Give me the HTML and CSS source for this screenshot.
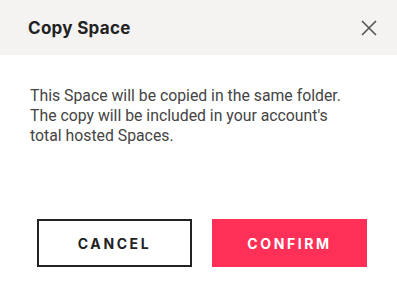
FILE: index.html
```html
<!DOCTYPE html>
<html>
<head>
<meta charset="utf-8">
<link rel="stylesheet" href="styles.css">
</head>
<body>
<div class="dialog">
  <div class="header">
    <h1 class="title">Copy Space</h1>
    <button class="close" aria-label="Close">
      <svg width="16" height="16" viewBox="0 0 16 16"><path d="M1 1L15 15M15 1L1 15" stroke="#555" stroke-width="1.6" fill="none"/></svg>
    </button>
  </div>
  <div class="body">
    <p class="text">This Space will be copied in the same folder. The copy will be included in your account's total hosted Spaces.</p>
  </div>
  <div class="actions">
    <button class="btn btn-cancel">CANCEL</button>
    <button class="btn btn-confirm">CONFIRM</button>
  </div>
</div>
</body>
</html>
```
FILE: styles.css
```css
html, body {
  margin: 0;
  padding: 0;
  background: #ffffff;
}
.dialog {
  width: 397px;
  height: 298px;
  display: flex;
  flex-direction: column;
  font-family: Roboto, "Liberation Sans", sans-serif;
}
.header {
  height: 55px;
  background: #f4f3f2;
  display: flex;
  align-items: center;
  justify-content: space-between;
  padding: 0 20px 0 28px;
  box-sizing: border-box;
}
.title {
  margin: 0;
  font-family: Inter, "Noto Sans", sans-serif;
  font-weight: 700;
  font-size: 17px;
  color: #222;
  letter-spacing: 0.3px;
}
.close {
  border: 0;
  background: none;
  padding: 0;
  width: 16px;
  height: 16px;
  display: flex;
}
.body {
  padding: 31px 30px 0 30px;
}
.text {
  margin: 0;
  font-size: 15.8px;
  line-height: 20px;
  color: #444;
  width: 320px;
}
.actions {
  display: flex;
  gap: 20px;
  padding: 0 0 0 37px;
  margin-top: 73px;
}
.btn {
  width: 155px;
  height: 48px;
  box-sizing: border-box;
  font-family: Inter, "Noto Sans", sans-serif;
  font-weight: 700;
  font-size: 14px;
  letter-spacing: 2.6px;
  padding: 0;
  cursor: pointer;
}
.btn-cancel {
  background: #fff;
  border: 2px solid #222;
  color: #222;
}
.btn-confirm {
  background: #ff3057;
  border: 0;
  color: #fff;
}
```
